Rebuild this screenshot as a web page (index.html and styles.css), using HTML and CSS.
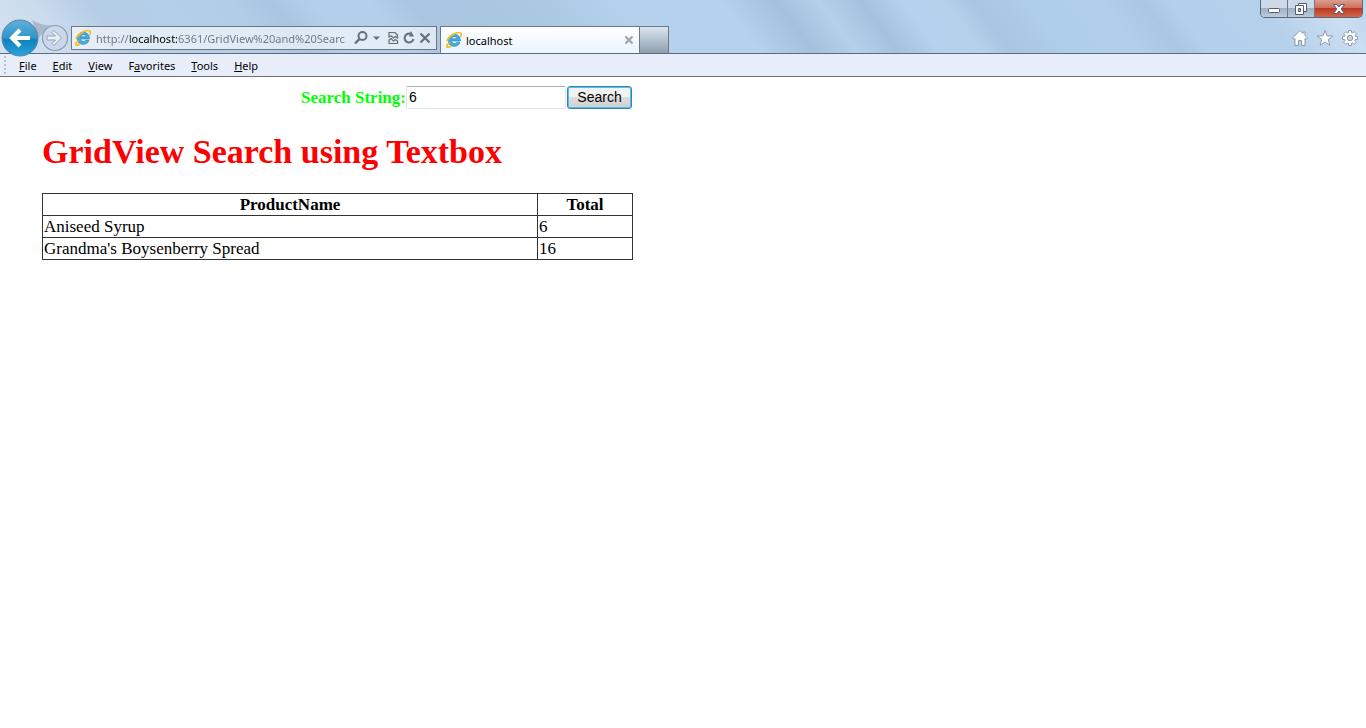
FILE: index.html
```html
<!DOCTYPE html>
<html lang="en">
<head>
    <meta charset="UTF-8">
    <meta name="viewport" content="width=device-width, initial-scale=1.0">
    <title>localhost</title>
    <link rel="stylesheet" href="styles.css">
</head>
<body>
    <svg class="defs" width="0" height="0" aria-hidden="true">
        <defs>
            <linearGradient id="backFill" x1="0" y1="0" x2="0" y2="1">
                <stop offset="0" stop-color="#5fb0da"/>
                <stop offset="0.5" stop-color="#2f96cb"/>
                <stop offset="0.55" stop-color="#0f80be"/>
                <stop offset="1" stop-color="#2aa5dc"/>
            </linearGradient>
            <symbol id="ie" viewBox="0 0 16 16">
                <path d="M14.400 9H5.400c.2 1.600 1.400 2.500 3 2.500 1.100 0 2-.4 2.500-1.200h3.100c-.8 2.500-2.900 4-5.600 4-3.700 0-6.200-2.400-6.200-5.900 0-3.600 2.500-6.100 6.200-6.100 3.800 0 6.100 2.700 6 6.700zM5.500 6.800h5.600C10.900 5.400 9.900 4.700 8.400 4.700S5.800 5.400 5.500 6.800z" fill="#48ade2" stroke="#1b78b8" stroke-width="0.600"/>
                <path d="M3.200 10.800C.8 13.200.2 15 1.300 15.300c.9.200 2.300-.4 3.700-1.300M1.200 8.500C2.500 4.500 10.500-1 14.500.9c1.200.6 1.100 2 .4 3.500" fill="none" stroke="#f5bd1a" stroke-width="1.600" stroke-linecap="round"/>
            </symbol>
        </defs>
    </svg>

    <header class="titlebar">
        <nav class="nav-buttons">
            <button class="back" aria-label="Back">
                <svg width="38" height="34" viewBox="0 0 38 34">
                    <circle cx="19" cy="19" r="18" fill="url(#backFill)" stroke="#60829c" stroke-width="1"/>
                    <path d="M29 19H12M19 11l-8 8 8 8" fill="none" stroke="#fff" stroke-width="4"/>
                </svg>
            </button>
            <button class="forward" aria-label="Forward">
                <svg width="28" height="28" viewBox="0 0 28 28">
                    <path d="M-9-4Q0 2 14 1.500L4 6-2 14z" fill="#a9b9ca"/>
                    <circle cx="14" cy="14" r="12.500" fill="#c9d9e9" stroke="#8c9caf" stroke-width="1.200"/>
                    <path d="M6 12h8.500L11 8.500l2-2L20.500 14 13 21.500l-2-2 3.500-3.500H6z" fill="#e6eef6" stroke="#94a4b6" stroke-width="1"/>
                </svg>
            </button>
        </nav>

        <div class="address">
            <svg width="16" height="16"><use href="#ie"/></svg>
            <input class="url" type="text" aria-label="Address" value="http://localhost:6361/GridView%20and%20Searc">
            <button aria-label="Search">
                <svg width="16" height="16" viewBox="0 0 16 16"><circle cx="9.500" cy="6" r="4" fill="none" stroke="#6a6f76" stroke-width="2"/><path d="M6.500 9L2 13.500" stroke="#6a6f76" stroke-width="2.400"/></svg>
            </button>
            <button aria-label="Show history">
                <svg width="16" height="16" viewBox="0 0 16 16"><path d="M4 6.500h7L7.500 10z" fill="#6a6f76"/></svg>
            </button>
            <button aria-label="Compatibility view">
                <svg width="16" height="16" viewBox="0 0 16 16"><path d="M4 7V2.500h6L12.500 5v3L10.500 6.500 8.500 8 6 6zM4 13.500V10l2-1.500L8.500 11l2-1.500 2 1.500v2.500z" fill="#dde5ec" stroke="#6a6f76" stroke-width="1.200"/></svg>
            </button>
            <button aria-label="Refresh">
                <svg width="16" height="16" viewBox="0 0 16 16"><path d="M10.500 4.200A4.500 4.500 0 1 0 12.500 9" fill="none" stroke="#6a6f76" stroke-width="2"/><path d="M8 6.500h5l-3-5.500z" fill="#6a6f76"/></svg>
            </button>
            <button aria-label="Stop">
                <svg width="16" height="16" viewBox="0 0 16 16"><path d="M3.500 3.500l9 9M12.500 3.500l-9 9" stroke="#6a6f76" stroke-width="2.200"/></svg>
            </button>
        </div>

        <div class="tab">
            <svg width="16" height="16"><use href="#ie"/></svg>
            <span class="tab-title">localhost</span>
            <button aria-label="Close tab">
                <svg width="10" height="10" viewBox="0 0 10 10"><path d="M1.500 1.500l7 7M8.500 1.500l-7 7" stroke="#a0a3a8" stroke-width="2.200"/></svg>
            </button>
        </div>
        <button class="new-tab" aria-label="New tab"></button>

        <div class="corner">
            <div class="window-buttons">
                <button class="minimize" aria-label="Minimize">
                    <svg width="14" height="14" viewBox="0 0 14 14"><rect x="1.500" y="6.500" width="11" height="4" rx="1" fill="#fff" stroke="#545b6b"/></svg>
                </button>
                <button class="restore" aria-label="Restore">
                    <svg width="14" height="14" viewBox="0 0 14 14"><path d="M4.500 1.500h8v8h-8z" fill="#fff" stroke="#545b6b"/><path d="M1.500 3.500h8v9h-8z" fill="#fff" stroke="#545b6b"/><path d="M4.500 6.500h2v3h-2z" fill="#a9b8cc" stroke="#545b6b"/></svg>
                </button>
                <button class="close" aria-label="Close">
                    <svg width="14" height="14" viewBox="0 0 14 14"><path d="M1.500 2.500h3.500l2 2.500 2-2.500h3.500L9.200 7l3.300 4.500H9L7 9l-2 2.500H1.500L4.800 7z" fill="#fff" stroke="#545b6b"/></svg>
                </button>
            </div>
            <div class="tools">
                <button aria-label="Home">
                    <svg width="18" height="18" viewBox="0 0 18 18"><path d="M9 1.500L1.500 9l1 1.500L4 9.500v7h3.500v-5h3v5H14v-7l1.500 1 1-1.500L14 6.500V3h-2v1.500z" fill="#fff" stroke="#8c9bab"/></svg>
                </button>
                <button aria-label="Favorites">
                    <svg width="18" height="18" viewBox="0 0 18 18"><path d="M9 1.500l2 5.300 5.800.2-4.500 3.600 1.600 5.700L9 13l-4.900 3.300 1.600-5.700L1.200 7l5.800-.2z" fill="#fff" stroke="#8c9bab"/></svg>
                </button>
                <button aria-label="Settings">
                    <svg width="18" height="18" viewBox="0 0 18 18">
                        <path d="M7.500 1.500h3v2.100l1.200.5 1.500-1.500 2.200 2.200-1.500 1.500.5 1.200h2.100v3h-2.100l-.5 1.200 1.500 1.500-2.200 2.200-1.500-1.500-1.200.5v2.100h-3v-2.100l-1.200-.5-1.500 1.500-2.200-2.200 1.500-1.500-.5-1.200H1.500v-3h2.100l.5-1.200-1.500-1.500 2.200-2.200 1.500 1.500 1.200-.5z" fill="#fff" stroke="#8c9bab"/>
                        <circle cx="9" cy="9" r="2.700" fill="#bcd4ec" stroke="#8c9bab"/>
                    </svg>
                </button>
            </div>
        </div>
    </header>

    <nav class="menubar">
        <a href="#"><u>F</u>ile</a>
        <a href="#"><u>E</u>dit</a>
        <a href="#"><u>V</u>iew</a>
        <a href="#">F<u>a</u>vorites</a>
        <a href="#"><u>T</u>ools</a>
        <a href="#"><u>H</u>elp</a>
    </nav>

    <main class="page">
        <form class="search" onsubmit="return false">
            <label for="searchText">Search String:</label>
            <input type="text" id="searchText" value="6">
            <button type="submit">Search</button>
        </form>
        <h1>GridView Search using Textbox</h1>
        <table class="grid">
            <thead>
                <tr><th class="product" scope="col">ProductName</th><th scope="col">Total</th></tr>
            </thead>
            <tbody>
                <tr><td>Aniseed Syrup</td><td>6</td></tr>
                <tr><td>Grandma's Boysenberry Spread</td><td>16</td></tr>
            </tbody>
        </table>
    </main>
</body>
</html>
```
FILE: styles.css
```css
body {
    margin: 0;
    background: #fff;
    color: #000;
    font-family: "Liberation Serif", "Times New Roman", serif;
    font-size: 17px;
}
button {
    padding: 0;
    border: none;
    background: none;
}
svg {
    display: block;
    flex: none;
}
.defs {
    position: absolute;
}

/* browser frame */
.titlebar {
    display: flex;
    align-items: flex-end;
    height: 53px;
    border-bottom: 1px solid #5f6b7c;
    background: linear-gradient(53deg, #d3e2f1 0%, #cbdcee 5%, #b6cde6 9%, #b3cfea 14%, #b1cde8 19%, #a9c5e1 22%, #b3cfeb 25%, #b3cfeb 29%, #a9c5e1 32%, #abc8e3 40%, #b5d1ed 47%, #b6d1ed 54%, #a4c0dc 58%, #b5d0eb 61%, #a5c1dd 64%, #b6d1ed 67%, #b5d0eb 70%, #a8c5e1 72%, #afcee9 76%, #b1cfea 81%, #a9c6e2 84%, #b3cfeb 86%, #b5d0eb 92%, #cbdef2 97%, #bdd6ee 100%);
    font-family: "Noto Sans", "Open Sans", sans-serif;
    font-size: 11px;
}
.nav-buttons {
    display: flex;
    align-items: flex-end;
    gap: 2px;
    padding: 0 2px 0 1px;
}
.nav-buttons svg {
    overflow: visible;
}
.back {
    z-index: 1;
}
.forward {
    padding-bottom: 1px;
}
.address {
    display: flex;
    align-items: center;
    box-sizing: border-box;
    width: 366px;
    height: 24px;
    margin-bottom: 3px;
    padding: 0 3px;
    border: 1px solid #6e7884;
    background: rgba(255, 255, 255, 0.6);
}
.url {
    flex: 1;
    min-width: 0;
    padding: 0 0 0 5px;
    border: none;
    background: linear-gradient(90deg, #6f747a 39px, #000 39px, #000 87px, #6f747a 87px);
    -webkit-background-clip: text;
    background-clip: text;
    color: transparent;
    font: inherit;
}
.tab {
    display: flex;
    align-items: center;
    gap: 4px;
    box-sizing: border-box;
    width: 200px;
    height: 27px;
    margin-left: 3px;
    padding: 0 5px;
    border: 1px solid #6e7884;
    border-bottom: none;
    background: linear-gradient(#fff, #e9f4fe);
}
.tab-title {
    flex: 1;
}
.new-tab {
    box-sizing: border-box;
    width: 29px;
    height: 27px;
    border: 1px solid #6e7884;
    border-width: 1px 1px 0 0;
    background: linear-gradient(#dbe5ef, #8f9eae);
}
.corner {
    display: flex;
    flex-direction: column;
    align-items: flex-end;
    justify-content: space-between;
    align-self: stretch;
    margin-left: auto;
}
.window-buttons {
    display: flex;
    margin-right: 3px;
    border: 1px solid #5b6677;
    border-top: none;
    border-radius: 0 0 5px 5px;
    overflow: hidden;
}
.window-buttons button {
    display: flex;
    align-items: center;
    justify-content: center;
    width: 27px;
    height: 17px;
    border-right: 1px solid #6d7888;
    background: linear-gradient(#cdd9e7 45%, #9fb1c7 50%, #bccbdd);
}
.window-buttons .close {
    width: 47px;
    border-right: none;
    background: linear-gradient(#dc9d91 0%, #cf6f5c 45%, #bb3a23 50%, #d2674d);
}
.tools {
    display: flex;
    gap: 7px;
    padding: 0 7px 6px 0;
}
.menubar {
    display: flex;
    gap: 16px;
    height: 22px;
    padding-left: 4px;
    border-bottom: 1px solid #6e7278;
    background: #e7eefa;
    font: 11px/24px "Noto Sans", "Open Sans", sans-serif;
}
.menubar::before {
    content: "";
    height: 18px;
    margin: 2px -3px 0 0;
    border-left: 2px dotted #b9c0cb;
}
.menubar a {
    color: #000;
    text-decoration: none;
}

/* page content */
.page {
    max-width: 591px;
    margin: 9px 0 0 42px;
}
.search {
    display: flex;
    align-items: center;
    justify-content: flex-end;
}
.search label {
    color: #0f0;
    font-weight: bold;
}
.search input {
    box-sizing: border-box;
    width: 160px;
    height: 23px;
    padding: 0 2px 1px;
    border: 1px solid #e2e3ea;
    border-top-color: #abadb3;
    border-radius: 2px;
    font: 14px "Liberation Sans", Arial, sans-serif;
}
.search button {
    width: 65px;
    height: 23px;
    margin: 0 1px;
    padding-bottom: 1px;
    border: 1px solid #3c7fb1;
    border-radius: 3px;
    background: linear-gradient(#f2f2f2 50%, #dddddd 50%, #cfcfcf);
    box-shadow: inset 0 0 0 1px #48c5ee;
    font: 14px "Liberation Sans", Arial, sans-serif;
}
h1 {
    margin: 24px 0 23px;
    color: #f00;
    font-size: 34px;
    line-height: 37px;
}
.grid {
    width: 100%;
    border-collapse: collapse;
}
.grid th,
.grid td {
    height: 19px;
    padding: 1px;
    border: 1px solid #333;
    line-height: 19px;
    text-align: left;
}
.grid th {
    text-align: center;
}
.grid .product {
    width: 492px;
}
```
